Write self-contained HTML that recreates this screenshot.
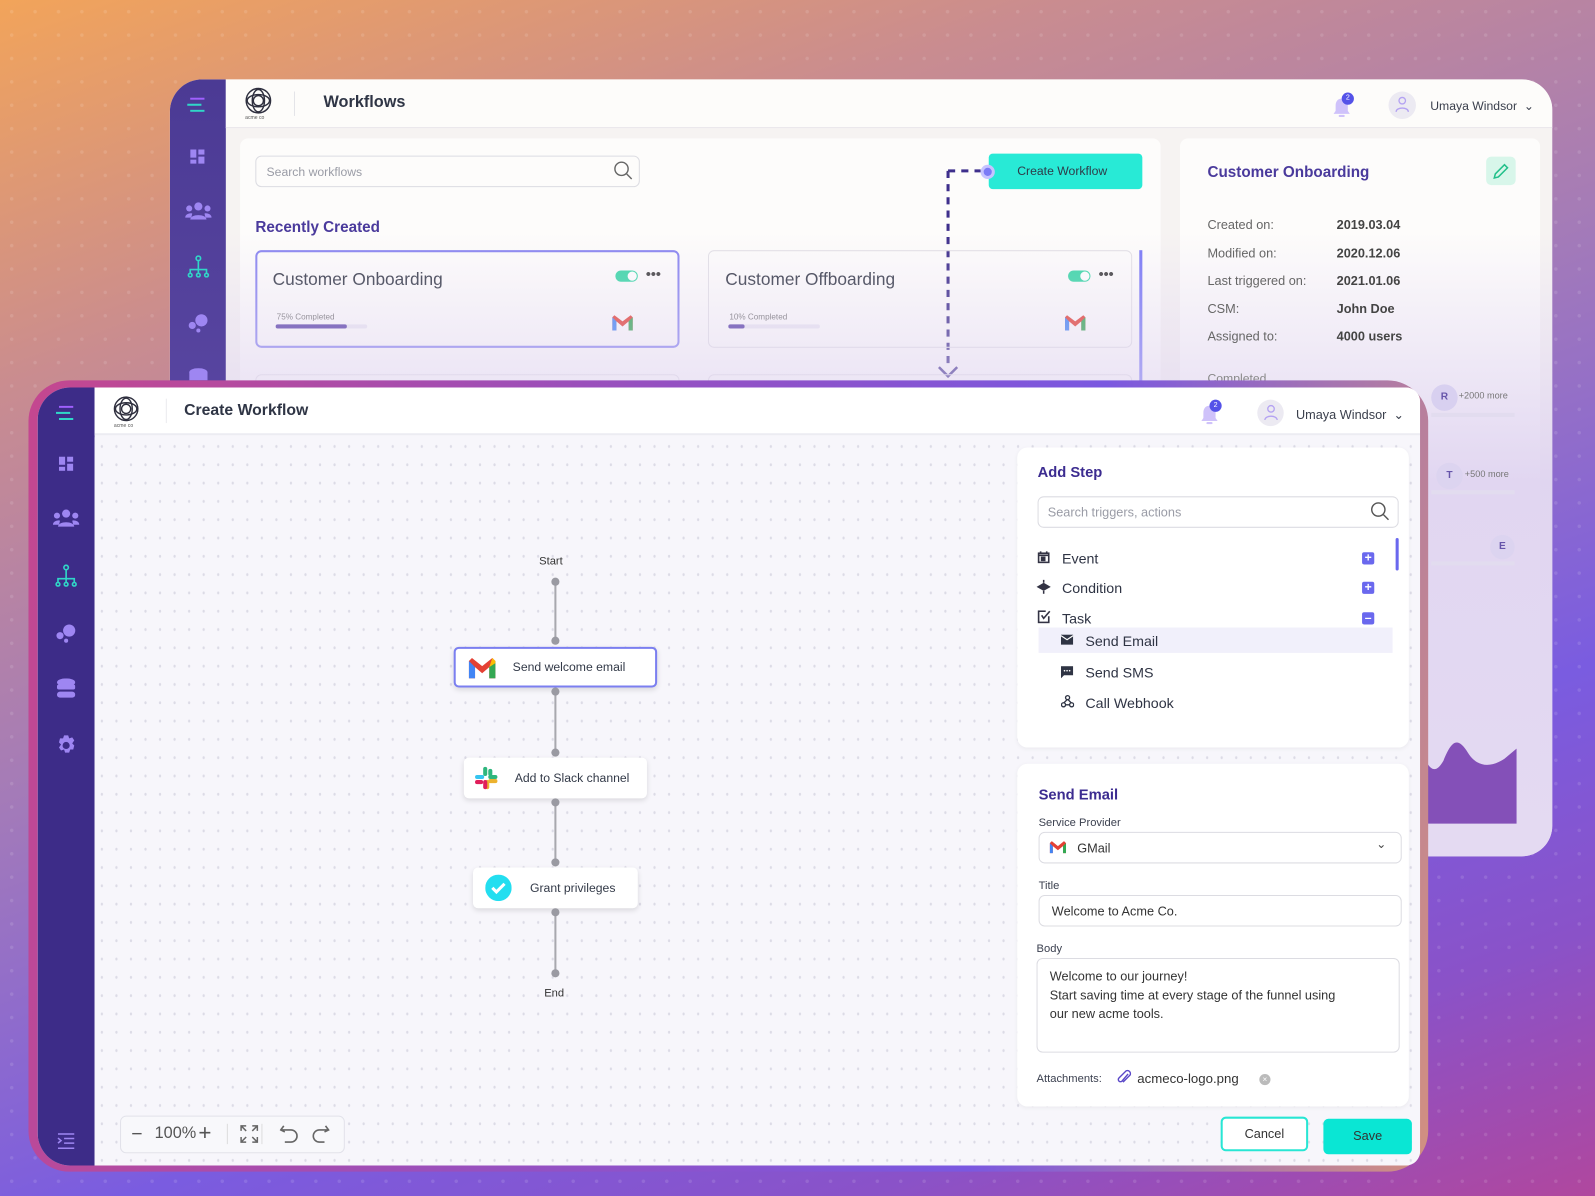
<!DOCTYPE html>
<html><head><meta charset="utf-8"><style>
*{box-sizing:border-box;margin:0;padding:0}
html,body{width:1595px;height:1196px;overflow:hidden}
body{position:relative;font-family:"Liberation Sans",sans-serif;color:#333a48;
background:linear-gradient(160deg,#f2a45a 0%,#c98c90 22%,#a47bb8 45%,#7a5ce0 70%,#8a52c8 85%,#b0479e 100%)}
#stage{position:absolute;left:0;top:0;width:1568px;height:1176px;transform:scale(1.01722,1.01701);transform-origin:0 0}
.dots{position:absolute;inset:0;background-image:radial-gradient(rgba(255,255,255,.12) 1.5px,transparent 2px);background-size:23px 23px}
.abs{position:absolute}
.back{left:167px;top:78px;width:1359px;height:764px;border-radius:32px 30px 30px 0;overflow:hidden;background:#f6f3f2}
.bside{left:0;top:0;width:55px;height:100%;background:linear-gradient(#4b3a94,#6a55b2)}
.bhead{left:55px;top:0;right:0;height:48px;background:#fdfcfa;border-bottom:1px solid #e8e6ea}
.fade{left:55px;top:150px;right:0;bottom:0;background:linear-gradient(rgba(230,220,242,0),rgba(222,210,240,.9) 40%,#e4daf2)}
.card{background:#fdfcfb;border-radius:8px}
.wf{border:1px solid #e3e1e6;border-radius:6px;background:transparent}
.frame{left:28px;top:374px;width:1376px;height:778px;border-radius:40px;background:linear-gradient(100deg,#c4478f,#9650c0 40%,#7a58e0 70%,#d29080 100%)}
.front{left:37px;top:381px;width:1359px;height:765px;border-radius:32px 14px 14px 32px;overflow:hidden;background:#f7f6fb}
.fside{left:0;top:0;width:56px;height:100%;background:#3d2c88}
.fhead{left:56px;top:0;right:0;height:47px;background:#fff;border-bottom:2px solid #ececf2}
.canvas{left:56px;top:49px;right:0;bottom:0;background-color:#f7f6fb;background-image:radial-gradient(#dcdbe6 1px,transparent 1.3px);background-size:14.3px 18px}
.node{background:#fff;border-radius:5px;box-shadow:0 2px 5px rgba(0,0,0,.12);font-size:12px;display:flex;align-items:center}
.dot{width:8px;height:8px;border-radius:50%;background:#9a9aa2;position:absolute}
.vl{position:absolute;width:1.5px;background:#a8a8ae}
.panel{background:#fff;border-radius:10px;box-shadow:0 1px 4px rgba(0,0,0,.05)}
.inp{border:1px solid #dcdce2;border-radius:6px;background:#fff}
.lbl{font-size:11px;color:#3c4150}
.it{font-size:14px;color:#2f3444}
.pb{width:12px;height:12px;background:#6a68ee;border-radius:2px;color:#fff;font-size:12px;line-height:11px;text-align:center;font-weight:bold}
</style></head><body>
<div id="stage">
<div class="dots"></div>

<!-- BACK WINDOW -->
<div class="abs back">
 <div class="abs bside">
  <svg class="abs" style="left:17px;top:18px" width="20" height="14"><rect x="3" y="0" width="14" height="2" fill="#a060ff"/><rect x="0" y="6" width="14" height="2" fill="#30d6c8"/><rect x="3" y="12" width="14" height="2" fill="#30d6c8"/></svg>
  <svg class="abs" style="left:20px;top:69px" width="14" height="14" fill="#9e86f2"><rect x="0" y="0" width="6" height="8"/><rect x="8" y="0" width="6" height="5"/><rect x="0" y="10" width="6" height="4"/><rect x="8" y="7" width="6" height="7"/></svg>
  <svg class="abs" style="left:15px;top:120px" width="26" height="18" fill="#9e86f2"><circle cx="13" cy="5" r="4"/><circle cx="4" cy="7" r="3"/><circle cx="22" cy="7" r="3"/><path d="M5 18c0-6 16-6 16 0z"/><path d="M0 16c0-4 6-5 7-4l-1 4z"/><path d="M26 16c0-4-6-5-7-4l1 4z"/></svg>
  <svg class="abs" style="left:17px;top:173px" width="22" height="22" fill="none" stroke="#30d6c8" stroke-width="1.6"><circle cx="11" cy="3" r="2.2"/><path d="M11 5v8M3 18v-4h16v4M11 13v5"/><circle cx="3" cy="19.5" r="1.8"/><circle cx="11" cy="19.5" r="1.8"/><circle cx="19" cy="19.5" r="1.8"/></svg>
  <svg class="abs" style="left:18px;top:230px" width="20" height="20" fill="#9e86f2"><circle cx="13" cy="7" r="6"/><circle cx="4" cy="12" r="3.5"/><circle cx="10" cy="17" r="2"/></svg>
  <svg class="abs" style="left:19px;top:284px" width="18" height="12" fill="#9e86f2"><ellipse cx="9" cy="4" rx="9" ry="4"/><rect x="0" y="4" width="18" height="8"/></svg>
 </div>
 <div class="abs bhead">
  <svg class="abs" style="left:17px;top:6px" width="30" height="30" fill="none" stroke="#2e2f3e" stroke-width="1.4"><circle cx="15" cy="15" r="12"/><ellipse cx="15" cy="15" rx="6" ry="11"/><ellipse cx="15" cy="15" rx="11" ry="6"/><circle cx="15" cy="15" r="5"/></svg>
  <div class="abs" style="left:19px;top:35px;font-size:5px;color:#555">acme co</div>
  <div class="abs" style="left:67px;top:12px;width:1px;height:24px;background:#e4e4e8"></div>
  <div class="abs" style="left:96px;top:14px;font-size:16px;font-weight:bold;color:#2f3545">Workflows</div>
  <svg class="abs" style="left:1087px;top:17px" width="20" height="22" fill="#cfc2fa"><path d="M10 2c-4 0-6 3-6 7v5l-2 3h16l-2-3V9c0-4-2-7-6-7z"/><rect x="7" y="18" width="6" height="2" rx="1"/></svg>
  <div class="abs" style="left:1097px;top:13px;width:12px;height:12px;border-radius:50%;background:#5452e8;color:#fff;font-size:7px;text-align:center;line-height:12px">2</div>
  <div class="abs" style="left:1143px;top:12px;width:27px;height:27px;border-radius:50%;background:#eceaf2"></div>
  <svg class="abs" style="left:1149px;top:16px" width="15" height="17" fill="none" stroke="#b4a2f2" stroke-width="1.3"><circle cx="7.5" cy="5" r="3.2"/><path d="M1.5 16c0-5 12-5 12 0"/></svg>
  <div class="abs" style="left:1184px;top:19px;font-size:12px;color:#3a3f4c">Umaya Windsor &nbsp;⌄</div>
 </div>
 <div class="abs card" style="left:69px;top:58px;width:905px;height:700px"></div>
 <div class="abs inp" style="left:84px;top:75px;width:378px;height:31px;background:#fdfcfb"></div>
 <div class="abs" style="left:95px;top:84px;font-size:12px;color:#9a9ca6">Search workflows</div>
 <svg class="abs" style="left:436px;top:80px" width="20" height="20" fill="none" stroke="#666" stroke-width="1.4"><circle cx="8" cy="8" r="6.5"/><path d="M13 13l5 5"/></svg>
 <div class="abs" style="left:805px;top:73px;width:151px;height:35px;background:#28ead6;border-radius:4px;font-size:12px;color:#2f3a48;line-height:35px;padding-left:28px">Create Workflow</div>
 <div class="abs" style="left:797px;top:84px;width:14px;height:14px;border-radius:50%;background:#c7c4ff"></div>
 <div class="abs" style="left:800px;top:87px;width:8px;height:8px;border-radius:50%;background:#7b7bf6"></div>
 <svg class="abs" style="left:755px;top:85px" width="50" height="220"><path d="M10 5H42M10 5V200" stroke="#3e2f8c" stroke-width="3" stroke-dasharray="7 6" fill="none"/><path d="M1 198l9 9 9-9" stroke="#3e2f8c" stroke-width="2.5" fill="none"/></svg>
 <div class="abs" style="left:84px;top:137px;font-size:15px;font-weight:bold;color:#4a3a9c">Recently Created</div>
 <div class="abs wf" style="left:84px;top:168px;width:417px;height:96px;border:2px solid #8a86f0;border-radius:6px"></div>
 <div class="abs" style="left:101px;top:187px;font-size:17px;color:#3a3f4c">Customer Onboarding</div>
 <div class="abs" style="left:438px;top:188px;width:22px;height:11px;border-radius:6px;background:#3ed8a8"></div><div class="abs" style="left:450px;top:189px;width:9px;height:9px;border-radius:50%;background:#fff"></div>
 <div class="abs" style="left:468px;top:183px;font-size:14px;font-weight:bold;color:#444">•••</div>
 <div class="abs" style="left:105px;top:229px;font-size:8px;color:#777">75% Completed</div>
 <div class="abs" style="left:104px;top:241px;width:90px;height:4px;border-radius:2px;background:#ebe8f2"></div><div class="abs" style="left:104px;top:241px;width:70px;height:4px;border-radius:2px;background:#5940a8"></div>
 <svg class="abs" style="left:434px;top:231px" width="22" height="16"><path d="M1 3v13h4V7l6 5 6-5v9h4V3l-2-2-8 6-8-6z" fill="#e44134"/><path d="M1 3v13h4V7z" fill="#4285f4"/><path d="M17 7v9h4V3z" fill="#34a853"/></svg>
 <div class="abs wf" style="left:529px;top:168px;width:417px;height:96px"></div>
 <div class="abs" style="left:546px;top:187px;font-size:17px;color:#3a3f4c">Customer Offboarding</div>
 <div class="abs" style="left:883px;top:188px;width:22px;height:11px;border-radius:6px;background:#3ed8a8"></div><div class="abs" style="left:895px;top:189px;width:9px;height:9px;border-radius:50%;background:#fff"></div>
 <div class="abs" style="left:913px;top:183px;font-size:14px;font-weight:bold;color:#444">•••</div>
 <div class="abs" style="left:550px;top:229px;font-size:8px;color:#777">10% Completed</div>
 <div class="abs" style="left:549px;top:241px;width:90px;height:4px;border-radius:2px;background:#ebe8f2"></div><div class="abs" style="left:549px;top:241px;width:16px;height:4px;border-radius:2px;background:#5940a8"></div>
 <svg class="abs" style="left:879px;top:231px" width="22" height="16"><path d="M1 3v13h4V7l6 5 6-5v9h4V3l-2-2-8 6-8-6z" fill="#e44134"/><path d="M1 3v13h4V7z" fill="#4285f4"/><path d="M17 7v9h4V3z" fill="#34a853"/></svg>
 <div class="abs" style="left:953px;top:168px;width:3px;height:140px;background:#7b7bf6"></div>
 <div class="abs wf" style="left:84px;top:290px;width:417px;height:60px"></div>
 <div class="abs wf" style="left:529px;top:290px;width:417px;height:60px"></div>
 <div class="abs card" style="left:993px;top:58px;width:354px;height:694px"></div>
 <div class="abs fade"></div>
 <div class="abs" style="left:1020px;top:83px;font-size:15px;font-weight:bold;color:#4a3a9c">Customer Onboarding</div>
 <div class="abs" style="left:1294px;top:76px;width:29px;height:28px;border-radius:5px;background:#d8f6ea"></div>
 <svg class="abs" style="left:1300px;top:82px" width="18" height="17" fill="none" stroke="#22c08a" stroke-width="1.5"><path d="M2 15l1-4 9-9 3 3-9 9z"/></svg>
 <div class="abs" style="left:1020px;top:130px;font-size:12.5px;line-height:27.5px;color:#666">Created on:<br>Modified on:<br>Last triggered on:<br>CSM:<br>Assigned to:</div>
 <div class="abs" style="left:1147px;top:130px;font-size:12.5px;line-height:27.5px;color:#444;font-weight:bold">2019.03.04<br>2020.12.06<br>2021.01.06<br>John Doe<br>4000 users</div>
 <div class="abs" style="left:1020px;top:287px;font-size:12px;color:#888">Completed</div>
 <div class="abs" style="left:1240px;top:300px;width:26px;height:26px;border-radius:50%;background:#d8d0f0;font-size:10px;text-align:center;line-height:26px;font-weight:bold;color:#6655aa">R</div>
 <div class="abs" style="left:1267px;top:306px;font-size:9px;color:#777">+2000 more</div>
 <div class="abs" style="left:1240px;top:328px;width:82px;height:4px;background:#e2dcef"></div>
 <div class="abs" style="left:1245px;top:377px;width:26px;height:26px;border-radius:50%;background:#dcd4f0;font-size:10px;text-align:center;line-height:26px;font-weight:bold;color:#6655aa">T</div>
 <div class="abs" style="left:1273px;top:383px;font-size:9px;color:#777">+500 more</div>
 <div class="abs" style="left:1240px;top:404px;width:82px;height:4px;background:#e2dcef"></div>
 <div class="abs" style="left:1298px;top:448px;width:24px;height:24px;border-radius:50%;background:#dcd4f0;font-size:10px;text-align:center;line-height:24px;font-weight:bold;color:#6655aa">E</div>
 <div class="abs" style="left:1240px;top:474px;width:82px;height:4px;background:#e2dcef"></div>
 <svg class="abs" style="left:1230px;top:640px" width="94" height="92"><path d="M0 20C8 40 14 44 22 30C30 10 36 6 46 22C56 38 70 36 82 28L94 18V92H0z" fill="#8450b8"/></svg>
</div>

<!-- FRONT WINDOW -->
<div class="abs frame"></div>
<div class="abs front">
 <div class="abs fside">
  <svg class="abs" style="left:18px;top:18px" width="20" height="14"><rect x="3" y="0" width="14" height="2" fill="#a060ff"/><rect x="0" y="6" width="14" height="2" fill="#30d6c8"/><rect x="3" y="12" width="14" height="2" fill="#30d6c8"/></svg>
  <svg class="abs" style="left:21px;top:68px" width="14" height="14" fill="#9e86f2"><rect x="0" y="0" width="6" height="8"/><rect x="8" y="0" width="6" height="5"/><rect x="0" y="10" width="6" height="4"/><rect x="8" y="7" width="6" height="7"/></svg>
  <svg class="abs" style="left:15px;top:119px" width="26" height="18" fill="#9e86f2"><circle cx="13" cy="5" r="4"/><circle cx="4" cy="7" r="3"/><circle cx="22" cy="7" r="3"/><path d="M5 18c0-6 16-6 16 0z"/><path d="M0 16c0-4 6-5 7-4l-1 4z"/><path d="M26 16c0-4-6-5-7-4l1 4z"/></svg>
  <svg class="abs" style="left:17px;top:174px" width="22" height="22" fill="none" stroke="#30d6c8" stroke-width="1.6"><circle cx="11" cy="3" r="2.2"/><path d="M11 5v8M3 18v-4h16v4M11 13v5"/><circle cx="3" cy="19.5" r="1.8"/><circle cx="11" cy="19.5" r="1.8"/><circle cx="19" cy="19.5" r="1.8"/></svg>
  <svg class="abs" style="left:18px;top:232px" width="20" height="20" fill="#9e86f2"><circle cx="13" cy="7" r="6"/><circle cx="4" cy="12" r="3.5"/><circle cx="10" cy="17" r="2"/></svg>
  <svg class="abs" style="left:19px;top:286px" width="18" height="20" fill="#9e86f2"><ellipse cx="9" cy="4" rx="9" ry="4"/><rect x="0" y="6" width="18" height="5" rx="2"/><rect x="0" y="13" width="18" height="6" rx="3"/></svg>
  <svg class="abs" style="left:18px;top:342px" width="20" height="20" fill="#9e86f2"><path d="M8 0h4l1 3 3-1 2 3-2 3 2 2-1 4-3 0-1 3-4 0-1-3-3 1-2-3 2-3-2-2 1-4 3 0z"/><circle cx="10" cy="10" r="3.5" fill="#3d2c88"/></svg>
  <svg class="abs" style="left:19px;top:733px" width="18" height="16" fill="none" stroke="#9e86f2" stroke-width="1.5"><path d="M1 1h16M7 5.5h10M7 10h10M1 15h16M1 5l3 2.5-3 2.5"/></svg>
 </div>
 <div class="abs fhead">
  <svg class="abs" style="left:17px;top:7px" width="28" height="28" fill="none" stroke="#2e2f3e" stroke-width="1.4"><circle cx="14" cy="14" r="11.5"/><ellipse cx="14" cy="14" rx="6" ry="10.5"/><ellipse cx="14" cy="14" rx="10.5" ry="6"/><circle cx="14" cy="14" r="4.5"/></svg>
  <div class="abs" style="left:19px;top:35px;font-size:5px;color:#555">acme co</div>
  <div class="abs" style="left:70px;top:11px;width:1px;height:24px;background:#eaeaee"></div>
  <div class="abs" style="left:88px;top:14px;font-size:15.5px;font-weight:bold;color:#2f3545">Create Workflow</div>
  <svg class="abs" style="left:1086px;top:16px" width="20" height="22" fill="#cfc2fa"><path d="M10 2c-4 0-6 3-6 7v5l-2 3h16l-2-3V9c0-4-2-7-6-7z"/><rect x="7" y="18" width="6" height="2" rx="1"/></svg>
  <div class="abs" style="left:1096px;top:12px;width:12px;height:12px;border-radius:50%;background:#5452e8;color:#fff;font-size:7px;text-align:center;line-height:12px">2</div>
  <div class="abs" style="left:1143px;top:12px;width:26px;height:26px;border-radius:50%;background:#eceaf2"></div>
  <svg class="abs" style="left:1149px;top:16px" width="15" height="17" fill="none" stroke="#b4a2f2" stroke-width="1.3"><circle cx="7.5" cy="5" r="3.2"/><path d="M1.5 16c0-5 12-5 12 0"/></svg>
  <div class="abs" style="left:1181px;top:19px;font-size:12.5px;color:#3a3f4c">Umaya Windsor &nbsp;⌄</div>
 </div>
 <div class="abs canvas"></div>

 <!-- flow -->
 <div class="abs" style="left:493px;top:165px;font-size:11px;color:#333">Start</div>
 <div class="vl" style="left:508px;top:191px;height:60px"></div>
 <div class="dot" style="left:505px;top:187px"></div><div class="dot" style="left:505px;top:245px"></div>
 <div class="abs node" style="left:409px;top:255px;width:200px;height:40px;border:2px solid #7b7ff0">
  <svg style="margin-left:12px" width="28" height="21"><path d="M1 4v17h6V10l7 6 7-6v11h6V4l-3-3-10 8-10-8z" fill="#e44134"/><path d="M1 4v17h6V10z" fill="#4285f4"/><path d="M21 10v11h6V4z" fill="#34a853"/><path d="M24 1l3 3v2l-6 4z" fill="#fbbc04"/></svg>
  <span style="margin-left:16px">Send welcome email</span></div>
 <div class="vl" style="left:508px;top:299px;height:60px"></div>
 <div class="dot" style="left:505px;top:295px"></div><div class="dot" style="left:505px;top:355px"></div>
 <div class="abs node" style="left:419px;top:364px;width:180px;height:40px">
  <svg style="margin-left:10px" width="24" height="24"><rect x="9" y="1" width="4" height="9" rx="2" fill="#2eb67d"/><rect x="14" y="9" width="9" height="4" rx="2" fill="#2eb67d"/><rect x="1" y="9" width="9" height="4" rx="2" fill="#36c5f0"/><rect x="11" y="14" width="4" height="9" rx="2" fill="#ecb22e"/><rect x="14" y="13" width="9" height="4" rx="2" fill="#ecb22e"/><rect x="9" y="14" width="4" height="9" rx="2" fill="#e01e5a"/><rect x="1" y="14" width="8" height="4" rx="2" fill="#e01e5a"/><rect x="14" y="3" width="4" height="7" rx="2" fill="#2eb67d"/></svg>
  <span style="margin-left:16px">Add to Slack channel</span></div>
 <div class="vl" style="left:508px;top:408px;height:60px"></div>
 <div class="dot" style="left:505px;top:404px"></div><div class="dot" style="left:505px;top:463px"></div>
 <div class="abs node" style="left:428px;top:472px;width:162px;height:40px">
  <svg style="margin-left:12px" width="26" height="26"><circle cx="13" cy="13" r="13" fill="#23def0"/><path d="M7 13l4 4 8-8" stroke="#fff" stroke-width="3" fill="none"/></svg>
  <span style="margin-left:18px">Grant privileges</span></div>
 <div class="vl" style="left:508px;top:516px;height:60px"></div>
 <div class="dot" style="left:505px;top:512px"></div><div class="dot" style="left:505px;top:572px"></div>
 <div class="abs" style="left:498px;top:590px;font-size:11px;color:#333">End</div>

 <!-- zoom toolbar -->
 <div class="abs" style="left:81px;top:716px;width:221px;height:37px;border:1px solid #e2e2ea;border-radius:6px;background:#f8f8fb"></div>
 <div class="abs" style="left:92px;top:724px;font-size:19px;color:#555">−</div>
 <div class="abs" style="left:115px;top:725px;font-size:16px;color:#555">100%</div>
 <div class="abs" style="left:158px;top:720px;font-size:22px;color:#555">+</div>
 <div class="abs" style="left:186px;top:724px;width:1px;height:20px;background:#ddd"></div>
 <svg class="abs" style="left:199px;top:725px" width="18" height="18" fill="none" stroke="#666" stroke-width="1.5"><path d="M1 6V1h5M1 1l5 5M17 6V1h-5M17 1l-5 5M1 12v5h5M1 17l5-5M17 12v5h-5M17 17l-5-5"/></svg>
 <div class="abs" style="left:220px;top:724px;width:1px;height:20px;background:#ddd"></div>
 <svg class="abs" style="left:238px;top:724px" width="20" height="20" fill="none" stroke="#666" stroke-width="1.6"><path d="M4 2L1 6l4 2M1 6h10a6 6 0 010 12H5"/></svg>
 <svg class="abs" style="left:268px;top:724px" width="20" height="20" fill="none" stroke="#666" stroke-width="1.6"><path d="M15 2l3 4-4 2M18 6H9a6 6 0 000 12h5"/></svg>

 <div class="abs" style="left:-17px;top:0;width:1359px;height:765px">
 <!-- Add step panel -->
 <div class="abs panel" style="left:980px;top:59px;width:385px;height:295px"></div>
 <div class="abs" style="left:1000px;top:76px;font-size:14.5px;font-weight:bold;color:#3c2c90">Add Step</div>
 <div class="abs inp" style="left:1000px;top:107px;width:355px;height:31px"></div>
 <div class="abs" style="left:1010px;top:116px;font-size:12.5px;color:#9a9ca6">Search triggers, actions</div>
 <svg class="abs" style="left:1327px;top:112px" width="20" height="20" fill="none" stroke="#555" stroke-width="1.4"><circle cx="8" cy="8" r="6.5"/><path d="M13 13l5 5"/></svg>
 <svg class="abs" style="left:1000px;top:161px" width="12" height="12" fill="none" stroke="#334" stroke-width="1.6"><rect x="1" y="2" width="10" height="9"/><path d="M1 4h10M3 0v2M9 0v2"/><rect x="4" y="6" width="3" height="3" fill="#334"/></svg>
 <div class="abs it" style="left:1024px;top:160px">Event</div>
 <svg class="abs" style="left:999px;top:189px" width="14" height="14" fill="#334"><path d="M7 0v3M7 11v3" stroke="#334" stroke-width="1.5"/><path d="M0 7l7-4 7 4-7 4z"/></svg>
 <div class="abs it" style="left:1024px;top:189px">Condition</div>
 <svg class="abs" style="left:1000px;top:219px" width="13" height="13" fill="none" stroke="#334" stroke-width="1.6"><path d="M11 6v6H1V1h7"/><path d="M4 5l2 3 6-7"/></svg>
 <div class="abs it" style="left:1024px;top:219px">Task</div>
 <div class="abs pb" style="left:1319px;top:162px">+</div>
 <div class="abs pb" style="left:1319px;top:191px">+</div>
 <div class="abs pb" style="left:1319px;top:221px">–</div>
 <div class="abs" style="left:1352px;top:148px;width:3px;height:32px;border-radius:2px;background:#6a68ee"></div>
 <div class="abs" style="left:1001px;top:236px;width:348px;height:25px;background:#f1f0fb"></div>
 <svg class="abs" style="left:1023px;top:243px" width="12" height="10"><rect width="12" height="10" fill="#2f3444"/><path d="M0 1l6 4 6-4" stroke="#fff" stroke-width="1.2" fill="none"/></svg>
 <div class="abs it" style="left:1047px;top:241px">Send Email</div>
 <svg class="abs" style="left:1023px;top:274px" width="12" height="12"><path d="M0 0h12v9H3l-3 3z" fill="#2f3444"/><circle cx="3.5" cy="4.5" r="0.8" fill="#fff"/><circle cx="6" cy="4.5" r="0.8" fill="#fff"/><circle cx="8.5" cy="4.5" r="0.8" fill="#fff"/></svg>
 <div class="abs it" style="left:1047px;top:272px">Send SMS</div>
 <svg class="abs" style="left:1023px;top:302px" width="13" height="13" fill="none" stroke="#2f3444" stroke-width="1.3"><circle cx="6.5" cy="3" r="2"/><circle cx="2.5" cy="10" r="2"/><circle cx="10.5" cy="10" r="2"/><path d="M6 5l-3 3M4.5 10h4M7 5l3 3"/></svg>
 <div class="abs it" style="left:1047px;top:302px">Call Webhook</div>

 <!-- Send email panel -->
 <div class="abs panel" style="left:980px;top:370px;width:385px;height:337px"></div>
 <div class="abs" style="left:1001px;top:393px;font-size:14.5px;font-weight:bold;color:#3c2c90">Send Email</div>
 <div class="abs lbl" style="left:1001px;top:422px">Service Provider</div>
 <div class="abs inp" style="left:1001px;top:437px;width:357px;height:31px"></div>
 <svg class="abs" style="left:1012px;top:446px" width="16" height="12"><path d="M0 2v10h3V5l5 4 5-4v7h3V2l-2-2-6 5-6-5z" fill="#e44134"/><path d="M0 2v10h3V5z" fill="#4285f4"/><path d="M13 5v7h3V2z" fill="#34a853"/></svg>
 <div class="abs" style="left:1039px;top:446px;font-size:12.5px;color:#333">GMail</div>
 <div class="abs" style="left:1333px;top:442px;font-size:12px;color:#444">⌄</div>
 <div class="abs lbl" style="left:1001px;top:484px">Title</div>
 <div class="abs inp" style="left:1001px;top:499px;width:357px;height:31px"></div>
 <div class="abs" style="left:1014px;top:508px;font-size:12.5px;color:#333">Welcome to Acme Co.</div>
 <div class="abs lbl" style="left:999px;top:546px">Body</div>
 <div class="abs inp" style="left:999px;top:561px;width:357px;height:93px"></div>
 <div class="abs" style="left:1012px;top:570px;font-size:12.5px;line-height:18.5px;color:#333">Welcome to our journey!<br>Start saving time at every stage of the funnel using<br>our new acme tools.</div>
 <div class="abs lbl" style="left:999px;top:674px">Attachments:</div>
 <svg class="abs" style="left:1078px;top:670px" width="14" height="16" fill="none" stroke="#5a48c8" stroke-width="1.4"><path d="M11 5L5 12a2 2 0 01-3-3l7-7a3 3 0 014 4l-7 7"/></svg>
 <div class="abs" style="left:1098px;top:672px;font-size:13px;color:#333">acmeco-logo.png</div>
 <div class="abs" style="left:1218px;top:675px;width:11px;height:11px;border-radius:50%;background:#bbb;color:#fff;font-size:8px;text-align:center;line-height:11px">×</div>

 <div class="abs" style="left:1180px;top:717px;width:86px;height:34px;border:2px solid #28e6d4;border-radius:5px;background:#fff;font-size:12.5px;text-align:center;line-height:30px;color:#333">Cancel</div>
 <div class="abs" style="left:1281px;top:719px;width:87px;height:35px;border-radius:5px;background:#0ae6d4;font-size:12.5px;text-align:center;line-height:35px;color:#333">Save</div>
 </div>
</div>
</div>
</body></html>
